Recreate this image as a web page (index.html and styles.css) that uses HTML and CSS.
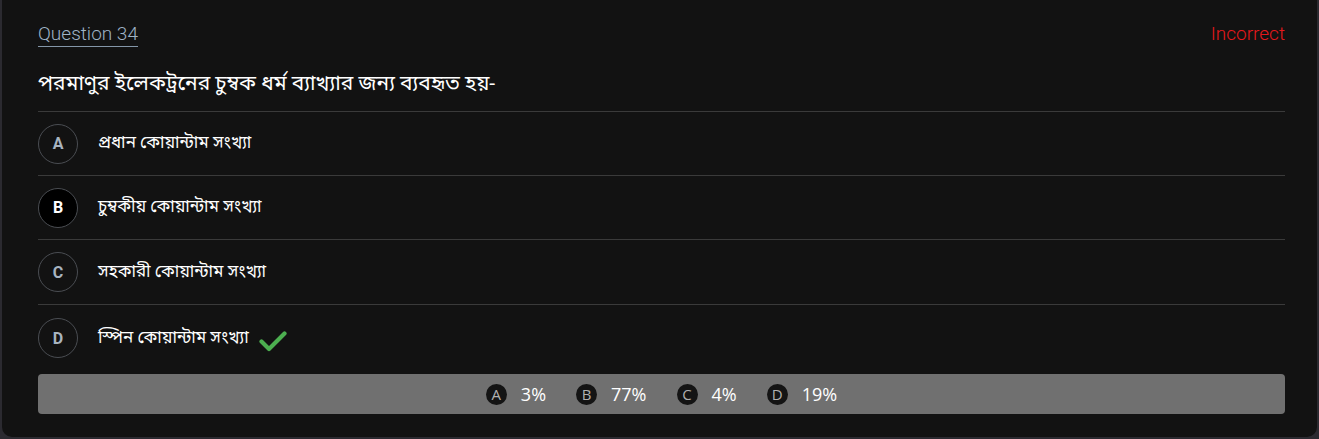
FILE: index.html
```html
<!DOCTYPE html>
<html lang="bn">
<head>
<meta charset="utf-8">
<title>Question 34</title>
<link rel="stylesheet" href="styles.css">
</head>
<body>
<div class="card">
  <div class="head">
    <span class="qnum">Question 34</span>
    <span class="status">Incorrect</span>
  </div>
  <div class="question">পরমাণুর ইলেকট্রনের চুম্বক ধর্ম ব্যাখ্যার জন্য ব্যবহৃত হয়-</div>
  <div class="options">
    <div class="option">
      <span class="letter">A</span>
      <span class="otext">প্রধান কোয়ান্টাম সংখ্যা</span>
    </div>
    <div class="option">
      <span class="letter selected">B</span>
      <span class="otext">চুম্বকীয় কোয়ান্টাম সংখ্যা</span>
    </div>
    <div class="option">
      <span class="letter">C</span>
      <span class="otext">সহকারী কোয়ান্টাম সংখ্যা</span>
    </div>
    <div class="option">
      <span class="letter">D</span>
      <span class="otext">স্পিন কোয়ান্টাম সংখ্যা</span>
      <svg class="check" width="28" height="22" viewBox="0 0 28 22"><path d="M2.5 11.5 L10 19 L25.5 3.5" fill="none" stroke="#4caf50" stroke-width="4.2" stroke-linecap="round" stroke-linejoin="round"/></svg>
    </div>
  </div>
  <div class="stats">
    <div class="stat"><span class="sl">A</span><span class="sp">3%</span></div>
    <div class="stat"><span class="sl">B</span><span class="sp">77%</span></div>
    <div class="stat"><span class="sl">C</span><span class="sp">4%</span></div>
    <div class="stat"><span class="sl">D</span><span class="sp">19%</span></div>
  </div>
</div>
</body>
</html>
```

FILE: styles.css
```css
html, body {
  margin: 0;
  padding: 0;
  background: #2b2a30;
  height: 100%;
}
body {
  font-family: Roboto, "Noto Sans", "Noto Sans Bengali", sans-serif;
  color: #fff;
}
.card {
  margin: 0 2px 2px 2px;
  background: #121212;
  border-radius: 0 0 10px 10px;
  padding: 22px 32px 24px 36px;
  box-sizing: border-box;
  height: 437px;
}
.head {
  display: flex;
  justify-content: space-between;
  align-items: flex-start;
}
.qnum {
  font-weight: 300;
  font-size: 19px;
  color: #9fb3c6;
  line-height: 23px;
  padding-bottom: 1px;
  border-bottom: 1px solid #8496a8;
}
.status {
  font-weight: 300;
  font-size: 19px;
  color: #e5191c;
  line-height: 23px;
}
.question {
  margin-top: 21px;
  font-size: 21px;
  line-height: 30px;
  padding-bottom: 13px;
  border-bottom: 1px solid #3a3a3a;
}
.option {
  display: flex;
  align-items: center;
  height: 63px;
  border-bottom: 1px solid #3a3a3a;
}
.option:nth-child(3) {
  height: 64px;
}
.option:last-child {
  border-bottom: none;
  height: 66px;
}
.letter {
  width: 38px;
  height: 38px;
  border: 1px solid #4a4d52;
  border-radius: 50%;
  display: flex;
  align-items: center;
  justify-content: center;
  font-weight: 700;
  font-size: 16px;
  color: #a8b4c0;
  flex-shrink: 0;
}
.letter.selected {
  background: #000;
  color: #fff;
}
.otext {
  margin-left: 20px;
  font-size: 17px;
  color: #fff;
}
.check {
  margin-left: 10px;
  margin-top: 6px;
}
.stats {
  margin-top: 3px;
  height: 40px;
  background: #707070;
  border-radius: 4px;
  display: flex;
  justify-content: center;
  align-items: center;
  gap: 30px;
}
.stat {
  display: flex;
  align-items: center;
  gap: 14px;
  font-family: "Open Sans", sans-serif;
}
.sl {
  width: 21px;
  height: 21px;
  border-radius: 50%;
  background: #141414;
  color: #b0b0b0;
  font-size: 15px;
  display: flex;
  align-items: center;
  justify-content: center;
}
.sp {
  font-size: 18px;
  color: #fff;
}
```
